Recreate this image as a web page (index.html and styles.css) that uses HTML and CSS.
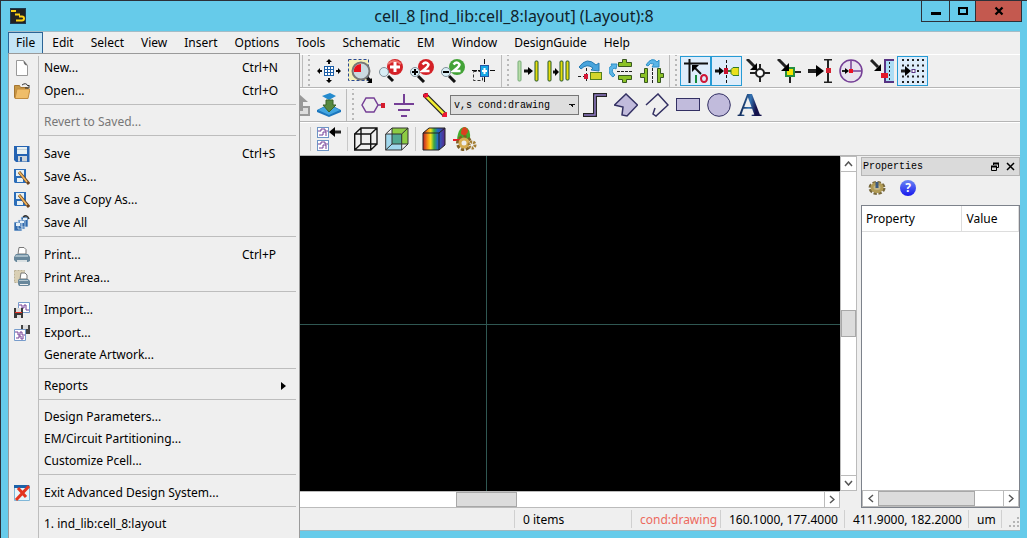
FILE: index.html
```html
<!DOCTYPE html>
<html lang="en">
<head>
<meta charset="utf-8">
<title>cell_8 [ind_lib:cell_8:layout] (Layout):8</title>
<link rel="stylesheet" href="styles.css">
</head>
<body>
<div class="window">
  <header class="titlebar">
    <svg class="app-icon" width="16" height="16" viewBox="0 0 16 16"><rect width="16" height="16" fill="#1d3a50"/><rect x="1" y="1" width="14" height="14" fill="#222"/><path d="M1 3h5M5 6.500h5M6 12.500h6q2 0 2-2t-2-2h-3" fill="none" stroke="#fbd016" stroke-width="2"/></svg>
    <h1 class="title">cell_8 [ind_lib:cell_8:layout] (Layout):8</h1>
    <div class="window-buttons">
      <button class="win-btn" aria-label="Minimize"><svg width="10" height="10"><rect y="6" width="10" height="3"/></svg></button>
      <button class="win-btn win-max" aria-label="Maximize"><svg width="10" height="10"><rect x="1" y="2" width="8" height="6" fill="none" stroke="#000" stroke-width="2"/></svg></button>
      <button class="win-btn win-close" aria-label="Close"><svg width="10" height="10"><path d="M1.500 1.500l7 7M8.500 1.500l-7 7" stroke="#000" stroke-width="2.300"/></svg></button>
    </div>
  </header>

  <div class="client">
    <nav class="menubar">
      <button class="menu-title active">File</button><button class="menu-title">Edit</button><button class="menu-title">Select</button><button class="menu-title">View</button><button class="menu-title">Insert</button><button class="menu-title">Options</button><button class="menu-title">Tools</button><button class="menu-title">Schematic</button><button class="menu-title">EM</button><button class="menu-title">Window</button><button class="menu-title">DesignGuide</button><button class="menu-title">Help</button>
    </nav>

    <div class="toolbar row-one">
      <span class="handle"></span>
      <button class="tool" aria-label="View all"><svg viewBox="0 0 24 24"><rect x="7" y="7" width="10" height="10" fill="#fff"/><path d="M7.500 7v10M10.500 7v10M13.500 7v10M16.500 7v10M7 7.500h10M7 10.500h10M7 13.500h10M7 16.500h10" stroke="#1c5fa8"/><path d="M12 1v4M12 19v4M1 12h4M19 12h4" stroke="#111" stroke-width="2"/><path d="M12 0l3 3H9zM12 24l3-3H9zM0 12l3-3v6zM24 12l-3-3v6z"/></svg></button>
      <button class="tool" aria-label="Zoom area"><svg viewBox="0 0 24 24"><path d="M.5.5h20v21H.5z" fill="#f3f0b8" stroke="#274795" stroke-dasharray="3 2"/><path d="M18 18l5 4" stroke="#111" stroke-width="3"/><path d="M24 19v5h-5z"/><circle cx="13" cy="12" r="8.500" fill="#cbd9e0" stroke="#777" stroke-width="2"/><path d="M13 5v8H6c-1-5 3-8 7-8z" fill="#e9101c"/></svg></button>
      <button class="tool" aria-label="Zoom in"><svg viewBox="0 0 24 24"><circle cx="16" cy="8" r="8" fill="#d42127"/><path d="M9 5q6-6 13 0" stroke="#ee7770" stroke-width="2" fill="none"/><path d="M16 3v10M11 8h10" stroke="#fff" stroke-width="3"/><path d="M9 17l5 5" stroke="#111" stroke-width="3"/><circle cx="5" cy="13" r="4.500" fill="#d9eef5" stroke="#829099"/></svg></button>
      <button class="tool" aria-label="Zoom in by 2"><svg viewBox="0 0 24 24"><circle cx="16" cy="8" r="8" fill="#d42127"/><path d="M12.500 5.500q3.500-4 6 0q0 2-6 6.500h7" stroke="#fff" stroke-width="2.500" fill="none"/><path d="M8 17l6 6" stroke="#111" stroke-width="3"/><circle cx="5" cy="13" r="4.500" fill="#d9eef5" stroke="#829099"/><path d="M5 10v6M2 13h6" stroke="#000" stroke-width="2"/></svg></button>
      <button class="tool" aria-label="Zoom out by 2"><svg viewBox="0 0 24 24"><circle cx="16" cy="8" r="8" fill="#43a337"/><path d="M12.500 5.500q3.500-4 6 0q0 2-6 6.500h7" stroke="#fff" stroke-width="2.500" fill="none"/><path d="M8 17l6 6" stroke="#111" stroke-width="3"/><circle cx="5" cy="13" r="4.500" fill="#d9eef5" stroke="#829099"/><path d="M2 13h6" stroke="#000" stroke-width="2"/></svg></button>
      <button class="tool" aria-label="Center view"><svg viewBox="0 0 24 24"><path d="M1.500 12.500h9v9h-9z" fill="none" stroke="#333" stroke-dasharray="3 2"/><path d="M12.500 0v24M0 11.500h24" stroke="#111" stroke-dasharray="5 1"/><rect x="8.500" y="6.500" width="8" height="11" fill="#17a8e5" stroke="#2356a3"/><path d="M12.500 9v6M10 12h5" stroke="#fff" stroke-width="2"/></svg></button>
      <span class="handle"></span>
      <button class="tool" aria-label="Move"><svg viewBox="0 0 24 24"><rect x="2" y="2" width="3" height="20" rx="1" fill="#b9dca9" stroke="#76ad79"/><rect x="19" y="2" width="3" height="20" rx="1" fill="#e8de0b" stroke="#23572a"/><path d="M8 12h5" stroke="#111" stroke-width="3"/><path d="M12 8l5 4-5 4z"/></svg></button>
      <button class="tool" aria-label="Copy"><svg viewBox="0 0 24 24"><rect x="1" y="2" width="3" height="20" rx="1" fill="#e8de0b" stroke="#23572a"/><rect x="13" y="2" width="3" height="20" rx="1" fill="#e8de0b" stroke="#23572a"/><rect x="19" y="2" width="3" height="19" rx="1" fill="#e8de0b" stroke="#23572a"/><path d="M6 13h3" stroke="#111" stroke-width="3"/><path d="M8 9l4 4-4 4z"/></svg></button>
      <button class="tool" aria-label="Rotate"><svg viewBox="0 0 24 24"><path d="M1 8Q9-3 18 6l3-2v8l-8-1 2-2q-6-5-12 1z" fill="#48a4dc" stroke="#267bb2"/><path d="M8.500 9v15M0 17.500h8" stroke="#222" stroke-dasharray="3 2"/><rect x="6" y="15" width="4" height="5" fill="#d51736"/><rect x="12.500" y="13.500" width="11" height="7" fill="#d3d52c" stroke="#54801f"/></svg></button>
      <button class="tool" aria-label="Mirror about X"><svg viewBox="0 0 24 24"><path d="M4 18C-2 14-1 8 3 6.500L2 5h6l-1 5-2-1q-4 3 1 7z" fill="#5bb5e7" stroke="#2e8fc6"/><path d="M8 12.500h16" stroke="#222" stroke-dasharray="3 1"/><path d="M9.500 3.500h4v-3h4v3h5v4h-13zM9.500 16.500h13v4h-5v3h-4v-3h-4z" fill="#8bc225" stroke="#395820"/></svg></button>
      <button class="tool" aria-label="Mirror about Y"><svg viewBox="0 0 24 24"><path d="M6 6Q12-3 17 3l2-2v7h-7l2-3q-4-2-6 2z" fill="#5bb5e7" stroke="#2e8fc6"/><path d="M12.500 9v15" stroke="#222" stroke-dasharray="3 1"/><path d="M7.500 9.500h-3v5h-4v4h4v5h3zM17.500 9.500h3v5h3v4h-3v5h-3z" fill="#8bc225" stroke="#395820"/></svg></button>
      <span class="handle"></span>
      <button class="tool on" aria-label="Entry origin"><svg viewBox="0 0 24 24"><path d="M0 4.500h24M5.500 0v24" stroke="#111" stroke-width="2"/><path d="M17 15l-6-6" stroke="#111" stroke-width="2"/><path d="M8 6h7l-7 7z"/><path d="M12 16v8" stroke="#168b3b" stroke-width="2"/><ellipse cx="20" cy="19.500" rx="3" ry="3.500" fill="none" stroke="#ce1737" stroke-width="2"/></svg></button>
      <button class="tool on" aria-label="Pin snap"><svg viewBox="0 0 24 24"><path d="M11.500 1v23" stroke="#111" stroke-dasharray="3 2"/><path d="M0 12h5" stroke="#111" stroke-width="3"/><path d="M4 8l5 4-5 4z"/><path d="M12 12h5" stroke="#2f7b2d" stroke-width="2"/><rect x="9" y="9" width="4" height="6" fill="#c9102e"/><path d="M24 8.500h-6l-2 2v4l2 2h6z" fill="#e9e01e" stroke="#2f7b2d"/></svg></button>
      <button class="tool" aria-label="Vertex snap"><svg viewBox="0 0 24 24"><path d="M14 5v18M4 14h20" stroke="#222" stroke-width="2"/><circle cx="14" cy="14" r="4" fill="#fff" stroke="#222" stroke-width="2"/><path d="M1 0l8 8" stroke="#222" stroke-width="3"/><path d="M11 11H4l7-7z"/></svg></button>
      <button class="tool" aria-label="Midpoint snap"><svg viewBox="0 0 24 24"><path d="M13 14v10M14 13h10" stroke="#222" stroke-width="2"/><rect x="9" y="9" width="8" height="8" fill="#f5e400" stroke="#27903f" stroke-width="2"/><path d="M1 0l8 8" stroke="#222" stroke-width="3"/><path d="M12 12H4l8-8z"/></svg></button>
      <button class="tool" aria-label="Edge snap"><svg viewBox="0 0 24 24"><path d="M16 .5h8M20 1v22M16 23.500h8" stroke="#222" stroke-width="2"/><path d="M0 12h9" stroke="#222" stroke-width="4"/><path d="M8 6l8 6-8 6z"/><rect x="18" y="9" width="5" height="5" fill="#d52332"/></svg></button>
      <button class="tool" aria-label="Arc snap"><svg viewBox="0 0 24 24"><circle cx="12" cy="12" r="11" fill="#e8e2ee" stroke="#753f96" stroke-width="1.500"/><path d="M12 1v11h11" fill="none" stroke="#753f96" stroke-width="1.500"/><path d="M3 12h4" stroke="#222" stroke-width="2"/><path d="M6 9l4 3-4 3z"/><rect x="10" y="10" width="4" height="4" fill="#ed1024"/></svg></button>
      <button class="tool" aria-label="Intersection snap"><svg viewBox="0 0 24 24"><path d="M24 1h-9v22h9" fill="#acddf5" stroke="#573384" stroke-width="2"/><path d="M19.500 3v19" stroke="#222" stroke-dasharray="2 2"/><path d="M1 1l7 7" stroke="#222" stroke-width="3"/><path d="M11 12H4l7-7z"/><rect x="11" y="14" width="7" height="5" fill="#e31928"/></svg></button>
      <button class="tool on" aria-label="Grid snap"><svg viewBox="0 0 24 24"><path d="M1 1h22M1 6.500h22M1 17.500h22M1 23h22M16 12h8" stroke="#222" stroke-width="2" stroke-dasharray="2 3"/><path d="M0 12h6" stroke="#222" stroke-width="3"/><path d="M4 7l6 5-6 5z"/><rect x="11" y="10.500" width="3" height="3" fill="#fff" stroke="#573384"/></svg></button>
    </div>

    <div class="toolbar row-two">
      <button class="tool" aria-label="Pop out of hierarchy"><svg viewBox="0 0 24 24"><path d="M3 14h20v8H3z" fill="#ddd" stroke="#999" stroke-width="2"/><path d="M13 1l9 8h-5v9h-8V9H4z" fill="#999"/></svg></button>
      <button class="tool" aria-label="Push into hierarchy"><svg viewBox="0 0 24 24"><path d="M0 17l12-6 12 6v2l-12 5-12-5z" fill="#1c76bd"/><path d="M1 17l11-5 11 5-11 5z" fill="#42a5e0"/><path d="M5 3l8-3 6 3-7 4z" fill="#258bce"/><path d="M9 7h7v5h3l-7 7-6-7h3z" fill="#56893f" stroke="#386229"/></svg></button>
      <span class="handle"></span>
      <button class="tool" aria-label="Pin"><svg viewBox="0 0 24 24"><path d="M1 12l4-7h8l4 7-4 7H5zM17 12h4" fill="none" stroke="#753f96" stroke-width="1.500"/><rect x="20" y="10" width="4" height="5" fill="#d51c2c"/></svg></button>
      <button class="tool" aria-label="Ground"><svg viewBox="0 0 24 24"><path d="M12 1v10M2 11h20M6 17h12M9 23h6" stroke="#753f96" stroke-width="2"/></svg></button>
      <button class="tool" aria-label="Wire"><svg viewBox="0 0 24 24"><path d="M1 1l22 22" stroke="#222" stroke-width="5"/><path d="M3 3l18 18" stroke="#f1ec32" stroke-width="2.500"/><path d="M0 1l5-1v4l-4 1zM20 20l4-1v5h-5z" fill="#ee1635"/></svg></button>
      <select class="layer-select" aria-label="Layer"><option>v,s cond:drawing</option></select>
      <button class="tool" aria-label="Path"><svg viewBox="0 0 24 24"><path d="M0 22h12v-20h12" fill="none" stroke="#222" stroke-width="4"/><path d="M1 22h11v-20h11" fill="none" stroke="#8f79c5" stroke-width="1.500"/></svg></button>
      <button class="tool" aria-label="Polygon"><svg viewBox="0 0 24 24"><path d="M.5 12L12 1l11.500 11L13 23l-5-1 1-8z" fill="#c1bbdc" stroke="#333063" stroke-width="1.500"/></svg></button>
      <button class="tool" aria-label="Polyline"><svg viewBox="0 0 24 24"><path d="M1 12L13 1l10 11-12 11-3-2 2-6" fill="none" stroke="#333063" stroke-width="1.500"/></svg></button>
      <button class="tool" aria-label="Rectangle"><svg viewBox="0 0 24 24"><rect x=".5" y="5.500" width="23" height="12" fill="#c1bbdc" stroke="#333063"/></svg></button>
      <button class="tool" aria-label="Circle"><svg viewBox="0 0 24 24"><circle cx="12" cy="12" r="11.300" fill="#c1bbdc" stroke="#333063"/></svg></button>
      <button class="tool text-tool" aria-label="Text">A</button>
    </div>

    <div class="toolbar row-three">
      <span class="divider"></span>
      <button class="tool" aria-label="Component"><svg viewBox="0 0 24 24"><g fill="#fff" stroke="#6d94c5"><rect x=".5" y=".5" width="11" height="10"/><rect x=".5" y="13.500" width="11" height="10"/></g><path d="M1 4h3v-2h4v2h3M2 8h4v-3h3v4M1 17h3v-2h4v2h3M2 21h4v-3h3v4" fill="none" stroke="#753f96"/><path d="M16 5h8" stroke="#222" stroke-width="3"/><path d="M12 5l6-5v10z"/></svg></button>
      <span class="divider"></span>
      <button class="tool" aria-label="Wireframe view"><svg viewBox="0 0 24 24"><path d="M.7 7h16v16H.700zM7 1h16v16H7zM.7 7L7 1M16.700 7L23 1M.7 23L7 17M16.700 23l6.300-6" fill="none" stroke="#111" stroke-width="1.400"/></svg></button>
      <button class="tool" aria-label="Shaded view"><svg viewBox="0 0 24 24"><path d="M7 1h16v16H7z" fill="#8dcc43"/><path d="M1 7h16v16H1z" fill="#a2d8ed"/><path d="M7 7h10v10H7z" fill="#52a892"/><path d="M.7 7h16v16H.700zM7 1h16v16H7zM.7 7L7 1M16.700 7L23 1M.7 23L7 17M16.700 23l6.300-6" fill="none" stroke="#333"/></svg></button>
      <span class="divider"></span>
      <button class="tool" aria-label="3D EM view"><svg viewBox="0 0 24 24"><defs><linearGradient id="spectrum"><stop stop-color="#ba1d28"/><stop offset=".2" stop-color="#f58a16"/><stop offset=".35" stop-color="#f8e11c"/><stop offset=".5" stop-color="#39a942"/><stop offset=".68" stop-color="#2167cc"/><stop offset="1" stop-color="#5b2689"/></linearGradient></defs><path d="M1 6l6-5h16v17l-6 5H1z" fill="url(#spectrum)" stroke="#222"/><path d="M1 6h16v17M17 6l6-5" fill="none" stroke="#222"/></svg></button>
      <button class="tool" aria-label="EM setup"><svg viewBox="0 0 24 24"><path d="M4 13Q5 0 12 0q6 1 5 13z" fill="#45ac2c"/><path d="M8 7q0-7 4-7 6 3 0 9z" fill="#dc4020"/><path d="M0 13h9" stroke="#ed1b28" stroke-width="2"/><circle cx="11" cy="16" r="6" fill="none" stroke="#806126" stroke-width="4" stroke-dasharray="3 1.500"/><circle cx="11" cy="16" r="4" fill="#eee" stroke="#d7ad50" stroke-width="3"/><circle cx="19" cy="18" r="3" fill="#eee" stroke="#a27c31" stroke-width="3" stroke-dasharray="2 1"/></svg></button>
    </div>

    <main class="workspace">
      <section class="design">
        <svg class="canvas" aria-label="Layout canvas"><line x1="57.550%" y1="0" x2="57.550%" y2="100%"/><line x1="0" y1="50.200%" x2="100%" y2="50.200%"/></svg>
        <div class="vscroll">
          <button class="scroll-btn" aria-label="Scroll up"><svg width="9" height="6"><path d="M1 5l3.500-4L8 5"/></svg></button>
          <div class="track"></div><div class="thumb"></div><div class="track"></div>
          <button class="scroll-btn" aria-label="Scroll down"><svg width="9" height="6"><path d="M1 1l3.500 4L8 1"/></svg></button>
        </div>
        <div class="hscroll">
          <div class="track before"></div><div class="thumb"></div><div class="track after"></div>
          <button class="scroll-btn" aria-label="Scroll right"><svg width="6" height="9"><path d="M1 1l4 3.500L1 8"/></svg></button>
        </div>
      </section>
      <aside class="dock">
        <div class="dock-title"><h2>Properties</h2>
          <button class="dock-btn" aria-label="Float"><svg width="10" height="10"><path d="M3.500 3V1.500h5v4H7M1.500 4.500h5v4h-5z" fill="none" stroke="#000"/><path d="M3 1.500h6M1 4.500h6" stroke="#000" stroke-width="2"/></svg></button>
          <button class="dock-btn" aria-label="Close"><svg width="9" height="9"><path d="M1 1l7 7M8 1L1 8" stroke="#000" stroke-width="1.500"/></svg></button>
        </div>
        <div class="dock-tools">
          <button class="dock-tool" aria-label="Settings"><svg width="18" height="16" viewBox="0 0 18 16"><ellipse cx="9" cy="8" rx="6.500" ry="5" fill="none" stroke="#77683c" stroke-width="4" stroke-dasharray="3 1.500"/><ellipse cx="9" cy="7.500" rx="5" ry="4" fill="#c3b687" stroke="#b19b56" stroke-width="3"/><path d="M9 2v6" stroke="#3d5b7f" stroke-width="3"/></svg></button>
          <button class="dock-tool help" aria-label="Help">?</button>
        </div>
        <div class="tree">
          <table class="properties"><thead><tr><th>Property</th><th>Value</th></tr></thead></table>
          <div class="tree-scroll">
            <button class="scroll-btn" aria-label="Scroll left"><svg width="6" height="9"><path d="M5 1L1 4.500 5 8"/></svg></button>
            <div class="thumb"></div><div class="track"></div>
            <button class="scroll-btn" aria-label="Scroll right"><svg width="6" height="9"><path d="M1 1l4 3.500L1 8"/></svg></button>
          </div>
        </div>
      </aside>
    </main>

    <footer class="status">
      <span class="cell items">0 items</span><span class="cell layer">cond:drawing</span><span class="cell coord">160.1000, 177.4000</span><span class="cell coord">411.9000, 182.2000</span><span class="cell unit">um</span><span class="cell grip"><svg width="10" height="10"><path d="M8 1h2M4 5h2M8 5h2M0 9h2M4 9h2M8 9h2" stroke="#b5b5b5" stroke-width="2"/></svg></span>
    </footer>
  </div>

  <div class="file-menu" role="menu">
    <button class="item with-icon"><svg viewBox="0 0 16 16"><path d="M2.500.5h7l4 5v10h-11z" fill="#fff" stroke="#999"/><path d="M9.500.5l4 5q-4 0-4-5z" fill="#666"/></svg><span>New...</span><kbd>Ctrl+N</kbd></button>
    <button class="item with-icon"><svg viewBox="0 0 16 16"><path d="M.5 14.500v-12h5l1 2h7v10z" fill="#c79845" stroke="#a67631"/><path d="M3 6h13l-2 9.500H1z" fill="#efbd69" stroke="#c28c3e"/><path d="M8 2q4-3 6 1l1-1v3h-4" fill="none" stroke="#333"/></svg><span>Open...</span><kbd>Ctrl+O</kbd></button>
    <hr>
    <button class="item" disabled><span>Revert to Saved...</span></button>
    <hr>
    <button class="item with-icon"><svg viewBox="0 0 16 16"><path d="M0 0h15.500v16H2l-2-2z" fill="#2463b2"/><path d="M3 1h10v7H3z" fill="#e8f1f3"/><path d="M3 3h10v1H3z" fill="#c5d2d8"/><path d="M4 10h9v5.500H4z" fill="#cbd3d9"/><path d="M6 11h2v4.500H6z" fill="#235ba2"/></svg><span>Save</span><kbd>Ctrl+S</kbd></button>
    <button class="item with-icon"><svg viewBox="0 0 16 16"><path d="M0 0h12v14H1l-1-1z" fill="#2b6db9"/><path d="M2 1h8v6H2zM3 9h6v4H3z" fill="#e8f1f3"/><path d="M5 3l10 12" stroke="#6b4422" stroke-width="3"/><path d="M5 3l8 10" stroke="#f0b65e" stroke-width="1.800"/></svg><span>Save As...</span></button>
    <button class="item with-icon"><svg viewBox="0 0 16 16"><path d="M0 0h12v14H1l-1-1z" fill="#2b6db9"/><path d="M2 1h8v6H2zM3 9h6v4H3z" fill="#e8f1f3"/><path d="M5 3l10 12" stroke="#6b4422" stroke-width="3"/><path d="M5 3l8 10" stroke="#f0b65e" stroke-width="1.800"/></svg><span>Save a Copy As...</span></button>
    <button class="item with-icon"><svg viewBox="0 0 16 16"><g fill="#2f69ad" stroke="#dce9f3" stroke-width=".7"><path d="M7 2h7v10H7zM4 5h7v9H4zM0 7h8v9H0z"/></g><path d="M2 8h4v3H2zM6 6h4v2H6zM9 3h4v2H9z" fill="#e5f0f8"/><path d="M9 2q4-3 6 2" stroke="#333" stroke-width="1.500" fill="none"/></svg><span>Save All</span></button>
    <hr>
    <button class="item with-icon"><svg viewBox="0 0 16 16"><path d="M4 7l1-6.500h5l2 2V7z" fill="#fff" stroke="#777"/><path d="M2 7h12l2 3v4l-2 1H2l-2-2v-3z" fill="#68879b"/><path d="M2 8h12v2H1z" fill="#a5bbc7"/><path d="M3 13h10v2H3z" fill="#d9e0e2"/></svg><span>Print...</span><kbd>Ctrl+P</kbd></button>
    <button class="item with-icon"><svg viewBox="0 0 16 16"><path d="M.5.500h10v12H.500z" fill="#d9cfb4" stroke="#bbb095" stroke-dasharray="2 1"/><path d="M6 9l1-6h4l2 2v4z" fill="#fff" stroke="#777"/><path d="M5 9h9l2 2v4l-2 1H5l-1-2v-4z" fill="#68879b"/><path d="M5 10h9v1H5z" fill="#b5c7d0"/><path d="M6 14h8v1H6z" fill="#eee"/></svg><span>Print Area...</span></button>
    <hr>
    <button class="item with-icon"><svg viewBox="0 0 16 16"><path d="M4.500.5h11v10h-11z" fill="#fff" stroke="#779ccb"/><path d="M5 3h3v3h2V3h2v5h3" fill="none" stroke="#753f96"/><path d="M0 6h9v10H0z" fill="#393939"/><path d="M2 6h5v4H2zM3 13h4v3H3z" fill="#ddd"/><path d="M1 10h7v1H1z" fill="#e62f21"/></svg><span>Import...</span></button>
    <button class="item with-icon"><svg viewBox="0 0 16 16"><path d="M7 0h9v9H7z" fill="#444"/><path d="M9 0h5v4H9z" fill="#ddd"/><path d="M.5 4.500h11v11H.500z" fill="#fff" stroke="#779ccb"/><path d="M1 7h3v3h2V7h2v3h3M2 13h3v-2h2v3h2v-3" fill="none" stroke="#753f96"/></svg><span>Export...</span></button>
    <button class="item"><span>Generate Artwork...</span></button>
    <hr>
    <button class="item"><span>Reports</span><i class="submenu-arrow"></i></button>
    <hr>
    <button class="item"><span>Design Parameters...</span></button>
    <button class="item"><span>EM/Circuit Partitioning...</span></button>
    <button class="item"><span>Customize Pcell...</span></button>
    <hr>
    <button class="item with-icon"><svg viewBox="0 0 16 16"><path d="M.5.5h15v15H.500z" fill="#e7f5fa" stroke="#80b7d8"/><path d="M0 0h15v3H0z" fill="#1b62a9"/><path d="M4 3l8 9M15 1L2 15" stroke="#e33520" stroke-width="3"/></svg><span>Exit Advanced Design System...</span></button>
    <hr>
    <button class="item"><span>1. ind_lib:cell_8:layout</span></button>
  </div>
</div>
</body>
</html>
```
FILE: styles.css
```css
* { box-sizing: border-box; }
body { margin: 0; font: 12px/16px "Noto Sans", "Open Sans", sans-serif; color: #000; }
button { font: inherit; color: inherit; padding: 0; border: 0; background: transparent; }
h1, h2 { margin: 0; font-weight: normal; }
svg { display: block; }

.window {
  position: relative;
  display: flex;
  flex-direction: column;
  height: 100vh;
  overflow: hidden;
  padding: 0 7px 7px 7px;
  border-top: 1px solid #2c3038;
  border-left: 1px solid #2c3038;
  background: #66cbea;
}
.titlebar { display: grid; grid-template-columns: 1fr auto 1fr; align-items: center; height: 30px; flex: none; }
.app-icon { margin-left: 2px; }
.title { font-size: 16px; line-height: 20px; color: #10222a; }
.window-buttons { display: flex; justify-self: end; align-self: start; margin-right: -2px; }
.win-btn { display: grid; place-items: center; width: 28px; height: 21px; border: 1px solid #2c3038; border-top: 0; border-right: 0; }
.win-max { width: 26px; }
.win-close { width: 47px; border-right: 1px solid #2c3038; background: #c4594f; }

.client { display: flex; flex-direction: column; flex: 1; min-height: 0; background: #efefef; }
.menubar { display: flex; gap: 1px; height: 23px; flex: none; border-top: 1px solid #a4bcc6; }
.menu-title { padding: 0 8px; }
.menu-title.active { border: 1px solid #2c6496; padding: 0 7px; background: #c4e5f6; }

.toolbar { display: flex; align-items: center; height: 34px; flex: none; overflow: hidden; border-top: 1px solid #fff; border-bottom: 1px solid #b5b5b5; }
.row-one { padding-left: 292px; }
.row-two { padding-left: 274px; }
.row-three { padding-left: 299px; }
.tool { display: grid; place-items: center; flex: none; width: 31px; height: 30px; }
.tool svg { width: 24px; height: 24px; }
.tool.on { border: 1px solid #269bd5; background: #deedfb; }
.handle { flex: none; width: 13px; height: 32px; background: linear-gradient(#efefef 3px, transparent 3px) 8px 1px / 2px 5px repeat-y, linear-gradient(#b8b8b8, #b8b8b8) 8px 0 / 2px 100% no-repeat, linear-gradient(#bbb, #bbb) 2px 0 / 1px 100% no-repeat; }
.divider { flex: none; width: 6px; height: 24px; background: linear-gradient(#c8c8c8, #c8c8c8) 3px 0 / 1px 100% no-repeat; }
.layer-select { flex: none; width: 129px; height: 20px; padding: 1px 3px 0; border: 1px solid #777; border-radius: 0; appearance: none; color: #000; font: 10px/16px "Liberation Mono", monospace; background: linear-gradient(to bottom right, #111 50%, transparent 50%) 121px 8px / 3px 3px no-repeat, linear-gradient(to bottom left, #111 50%, transparent 50%) 118px 8px / 3px 3px no-repeat, #dedede; }
.text-tool { font: bold 34px/30px "Liberation Serif", serif; color: transparent; background: linear-gradient(100deg, #16305f 30%, #3474b4 50%, #15124c 70%); background-clip: text; -webkit-background-clip: text; }

.workspace { display: flex; flex: 1; min-height: 0; gap: 4px; }
.design { display: grid; grid-template: minmax(0, 1fr) 17px / minmax(0, 1fr) 17px; flex: 1; min-width: 0; }
.canvas { width: 100%; height: 100%; background: #000; }
.canvas line { stroke: #2f5752; stroke-width: 1; shape-rendering: crispEdges; }
.vscroll { display: flex; flex-direction: column; border: 1px solid #bbb; background: #fff; }
.hscroll, .tree-scroll { display: flex; border: 1px solid #bbb; background: #fff; }
.track { flex: 1; }
.thumb { flex: none; border: 1px solid #a8a8a8; background: #dcdcdc; }
.vscroll .thumb { height: 27px; }
.hscroll .thumb { width: 61px; }
.hscroll .before { flex: 448; }
.hscroll .after { flex: 307; }
.scroll-btn { display: grid; place-items: center; flex: none; width: 15px; height: 15px; }
.scroll-btn path { fill: none; stroke: #555; stroke-width: 1.5; }
.vscroll .scroll-btn { border-bottom: 1px solid #bbb; }
.vscroll .scroll-btn:last-child { border-top: 1px solid #bbb; border-bottom: 0; }
.hscroll .scroll-btn, .tree-scroll .scroll-btn:last-child { border-left: 1px solid #bbb; }

.dock { display: flex; flex-direction: column; width: 159px; flex: none; padding-top: 1px; }
.dock-title { display: flex; align-items: center; gap: 6px; height: 19px; padding-right: 4px; border: 1px solid #b5b5b5; background: #dadada; }
.dock-title h2 { flex: 1; padding: 1px 0 0 1px; font: 10px/16px "Liberation Mono", monospace; }
.dock-tools { display: flex; gap: 15px; height: 29px; padding: 4px 7px; }
.dock-tool { display: grid; place-items: center; width: 17px; height: 16px; }
.help { width: 16px; border-radius: 50%; background: linear-gradient(#6b87f4, #1717ed); color: #fff; font-weight: bold; }
.tree { display: flex; flex-direction: column; justify-content: space-between; flex: 1; border: 1px solid #7d828b; background: #fff; }
.properties { width: 100%; height: 26px; border-spacing: 0; table-layout: fixed; }
.properties th { padding: 0 4px; text-align: left; font-weight: normal; border-bottom: 1px solid #ddd; border-right: 1px solid #ddd; }
.properties th:first-child { width: 64%; }
.tree-scroll { height: 17px; }
.tree-scroll .thumb { flex: 96; }
.tree-scroll .track { flex: 28; }

.status { display: flex; justify-content: flex-end; align-items: center; height: 23px; flex: none; border-bottom: 1px solid #9fb8c0; }
.cell { height: 18px; padding-left: 8px; line-height: 20px; border-left: 1px solid #d0d0d0; white-space: nowrap; }
.items { width: 117px; }
.layer { width: 89px; color: #ed6a5e; }
.coord { width: 124px; }
.unit { width: 33px; }
.grip { width: 19px; padding: 7px 0 0 7px; }

.file-menu { position: absolute; top: 52px; bottom: 0; left: 7px; width: 292px; padding-top: 2px; border: 1px solid #9a9a9a; border-bottom: 0; background: linear-gradient(#bdbdbd, #bdbdbd) 29px 2px / 1px 100% no-repeat, #efefef; overflow: hidden; }
.item { display: grid; grid-template-columns: 30px 1fr 57px; align-items: center; width: 100%; height: 22px; text-align: left; }
.item.with-icon { height: 23px; }
.item svg { width: 16px; height: 16px; margin-left: 5px; }
.item span { grid-column: 2; padding-left: 5px; white-space: nowrap; }
.item kbd { font: inherit; }
.item:disabled { color: #777; }
.file-menu hr { height: 1px; margin: 2px 3px 6px 30px; border: 0; background: #bdbdbd; }
.submenu-arrow { margin-left: 39px; border: 4px solid transparent; border-left: 5px solid #000; border-right: 0; width: 0; }
```
